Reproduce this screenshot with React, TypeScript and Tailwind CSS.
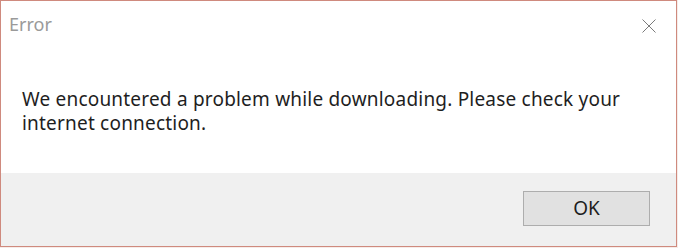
export default function App() {
  return (
    <div className="h-[248px] w-[678px] bg-[#f6ece9] font-['Noto_Sans','Open_Sans',sans-serif]">
      <div className="flex h-[247px] w-[677px] flex-col border border-[#cf8a7e] bg-white">
        {/* Title bar */}
        <div className="flex h-[46px] items-start justify-between">
          <div className="pl-[8px] pt-[12px] text-[18px] leading-[22px] text-[#9a9a9a]">Error</div>
          <div className="pr-[19px] pt-[17px]">
            <svg width="16" height="16" viewBox="0 0 16 16" className="block">
              <path d="M1.5 1.5 L14.5 14.5 M14.5 1.5 L1.5 14.5" stroke="#7a7a7a" strokeWidth="1" fill="none" />
            </svg>
          </div>
        </div>
        {/* Message */}
        <div className="flex-1 px-[21px] pt-[40px] text-[19px] leading-[24px] tracking-[0.2px] text-[#1e1e1e]">
          We encountered a problem while downloading. Please check your
          <br />
          internet connection.
        </div>
        {/* Footer */}
        <div className="flex h-[73px] items-start justify-end bg-[#f0f0f0] pr-[26px] pt-[18px]">
          <button className="h-[35px] w-[127px] border border-[#adadad] bg-[#e1e1e1] text-[19px] text-[#1e1e1e]">
            OK
          </button>
        </div>
      </div>
    </div>
  );
}
